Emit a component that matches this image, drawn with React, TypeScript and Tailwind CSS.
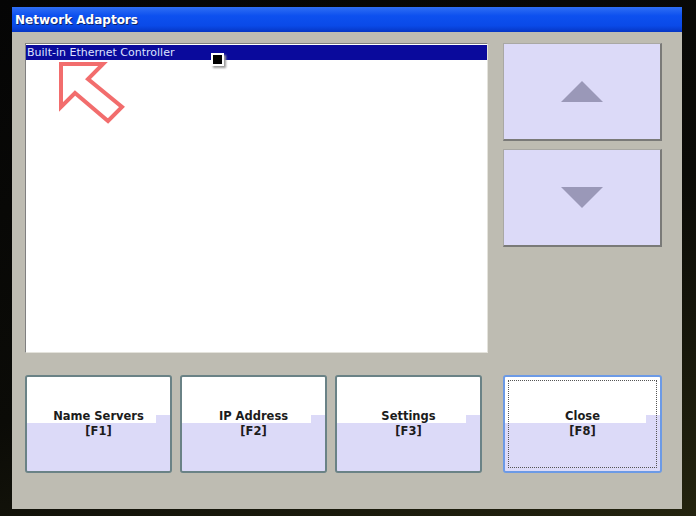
// Network Adaptors dialog (Windows CE style)

const font = "font-['DejaVu_Sans',sans-serif]";

function FnButton({ label, fkey, focused }: { label: string; fkey: string; focused?: boolean }) {
  return (
    <div
      className={`relative h-[98px] overflow-hidden rounded-[3px] ${
        focused ? "w-[159px] border-2 border-[#6c9ae6]" : "w-[147px] border-2 border-[#6a8286]"
      }`}
    >
      {/* two-tone face: white top, lavender bottom with a small step on the right */}
      <div className="absolute inset-0 flex flex-col">
        <div className="h-[46px] bg-white" />
        <div className="flex-1 bg-[#dcdaf8]" />
      </div>
      <div className="absolute right-0 top-[38px] h-[8px] w-[14px] bg-[#dcdaf8]" />
      {focused && (
        <div className="absolute inset-[3px] border border-dotted border-[#555]" />
      )}
      <div
        className={`relative flex h-full flex-col items-center justify-center text-[11.5px] font-bold leading-[15px] text-[#1c1c1c] ${font}`}
      >
        <span>{label}</span>
        <span>{fkey}</span>
      </div>
    </div>
  );
}

function ScrollButton({ dir }: { dir: "up" | "down" }) {
  return (
    <div className="flex h-[98px] w-[159px] items-center justify-center border-t border-l border-[#a9a8a4] border-r-2 border-b-2 border-r-[#7a7a78] border-b-[#7a7a78] bg-[#dcdaf8]">
      <svg width="42" height="22" viewBox="0 0 42 22">
        {dir === "up" ? (
          <polygon points="21,0 42,21 0,21" fill="#9a98b8" />
        ) : (
          <polygon points="0,0 42,0 21,21" fill="#9a98b8" />
        )}
      </svg>
    </div>
  );
}

export default function App() {
  return (
    <div className="h-[516px] w-[696px] overflow-hidden bg-[linear-gradient(160deg,#050505_0%,#0b0b07_55%,#24240f_100%)] pl-[12px] pt-[7px]">
      <div className="flex h-[502px] w-[670px] flex-col bg-[#bebcb2]">
        {/* title bar */}
        <div className="flex h-[25px] items-center bg-[linear-gradient(180deg,#2f6ff4_0%,#0d50ef_35%,#0a4ae8_75%,#0636c4_100%)] pl-[3px]">
          <span
            className={`text-[12px] font-bold text-white [text-shadow:1px_1px_0_#0a246a] ${font}`}
          >
            Network Adaptors
          </span>
        </div>

        <div className="flex flex-col pl-[13px] pt-[11px]">
          <div className="flex gap-[15px]">
            {/* list */}
            <div className="relative h-[310px] w-[463px] border border-t-[#808080] border-l-[#808080] border-r-[#e4e3dc] border-b-[#e4e3dc] bg-white">
              <div
                className={`mt-[1px] h-[15px] bg-[#0a0a9c] pl-[1px] text-[11px] leading-[15px] text-[#dde2ff] ${font}`}
              >
                Built-in Ethernet Controller
              </div>
              {/* cursor square */}
              <div className="absolute left-[185px] top-[9px] h-[13px] w-[13px] border-2 border-white bg-black shadow-[2px_2px_2px_#9a9a9a]" />
              {/* red annotation arrow */}
              <svg
                className="absolute left-[32px] top-[18px]"
                width="70"
                height="64"
                viewBox="0 0 70 64"
              >
                <polygon
                  points="3,2 45,2 30,17 64,45 50,59 17,31 3,45"
                  fill="white"
                  stroke="#f26d6d"
                  strokeWidth="4"
                  strokeLinejoin="miter"
                />
              </svg>
            </div>

            {/* scroll buttons */}
            <div className="flex flex-col gap-[8px]">
              <ScrollButton dir="up" />
              <ScrollButton dir="down" />
            </div>
          </div>

          {/* function buttons */}
          <div className="mt-[22px] flex">
            <div className="flex gap-[8px]">
              <FnButton label="Name Servers" fkey="[F1]" />
              <FnButton label="IP Address" fkey="[F2]" />
              <FnButton label="Settings" fkey="[F3]" />
            </div>
            <div className="ml-[21px]">
              <FnButton label="Close" fkey="[F8]" focused />
            </div>
          </div>
        </div>
      </div>
    </div>
  );
}
